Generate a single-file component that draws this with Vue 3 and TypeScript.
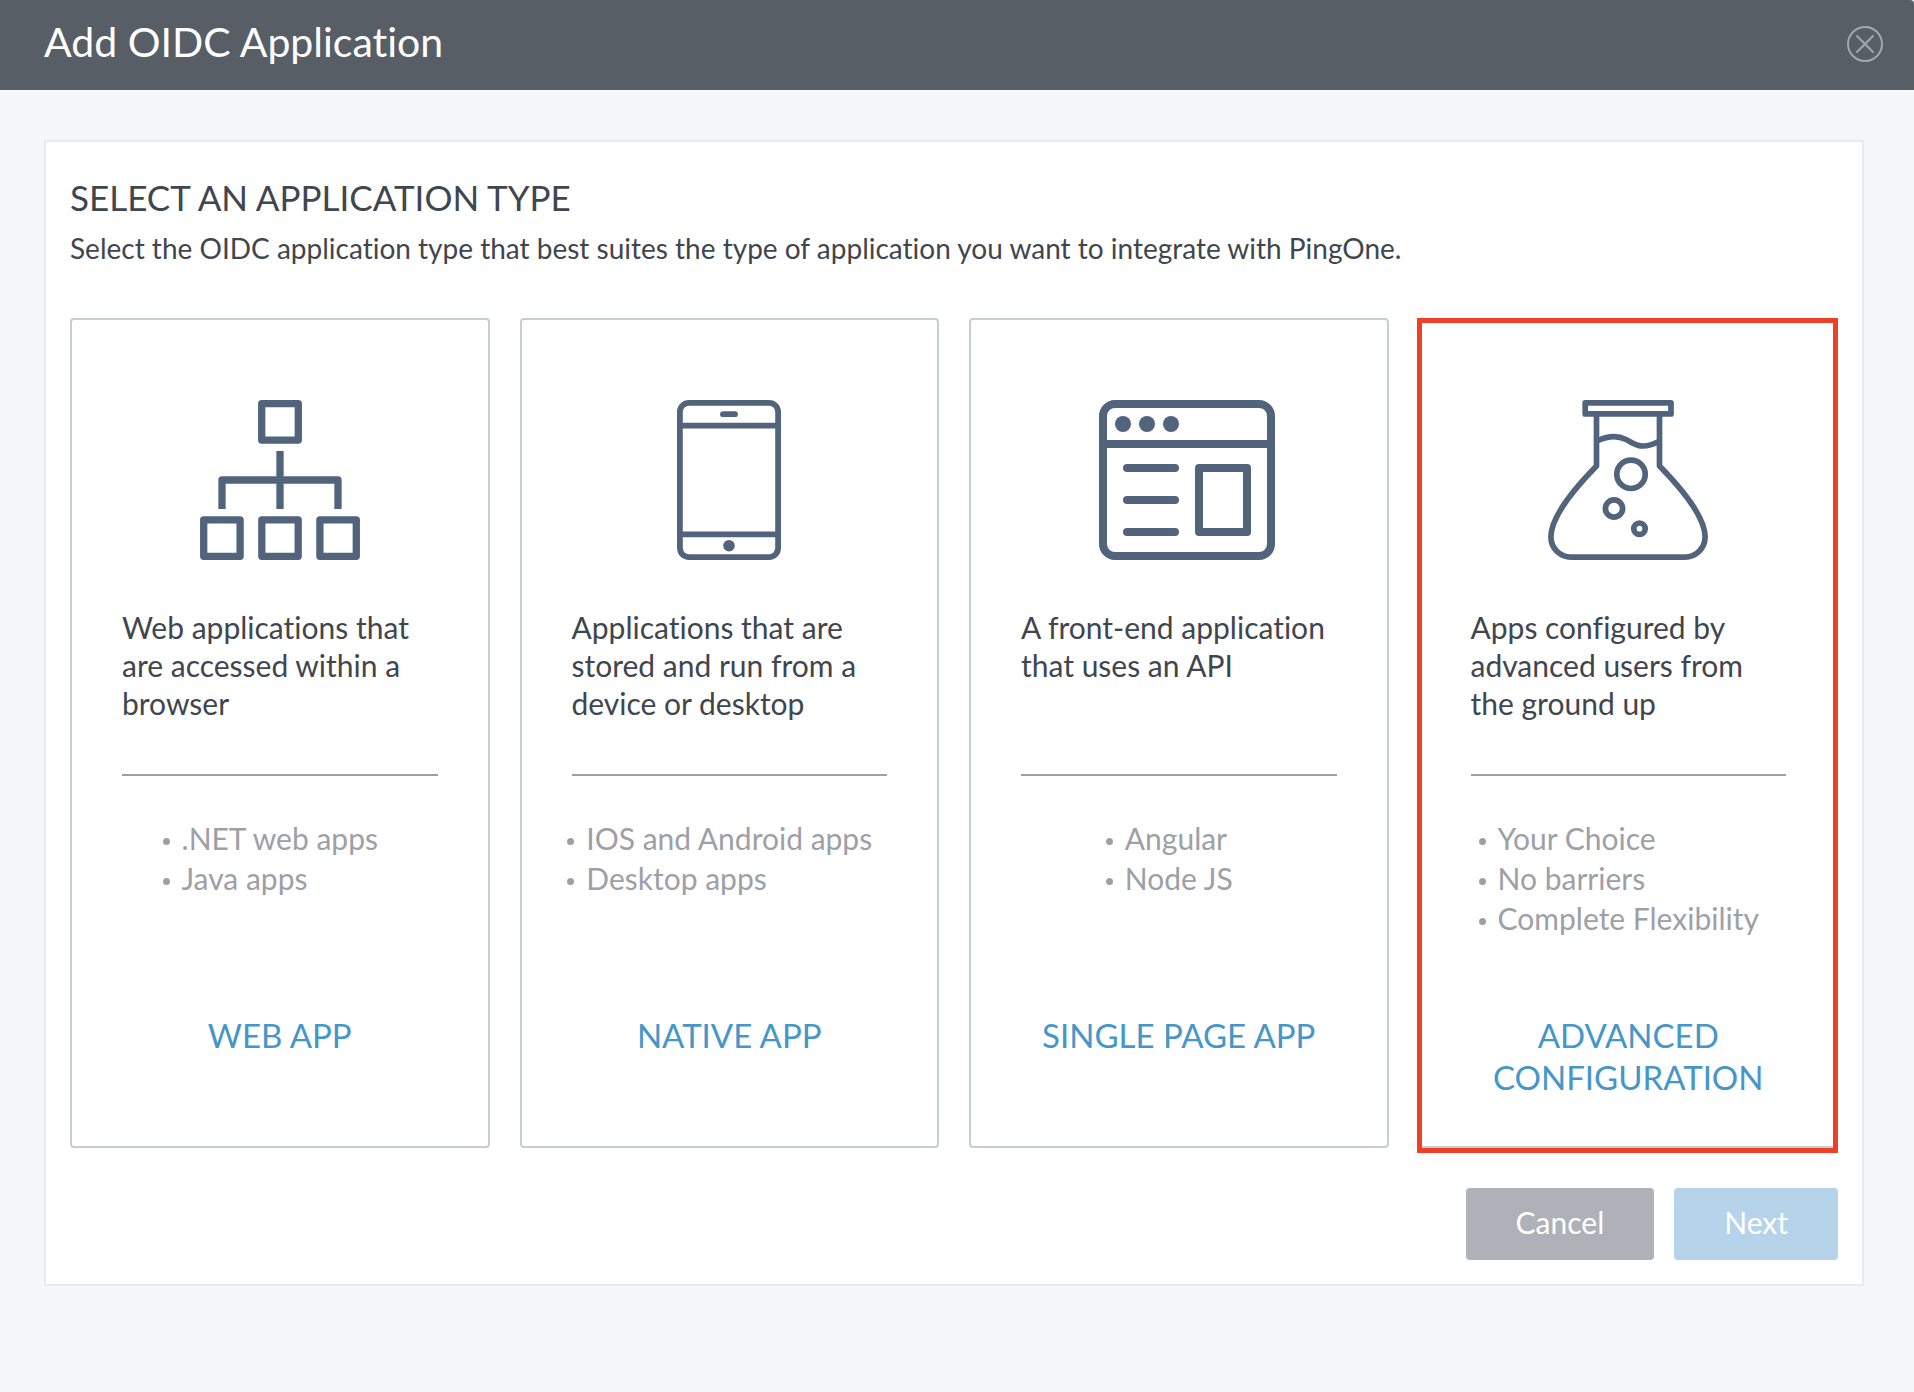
<script setup lang="ts">
import { ref } from 'vue'

type IconName = 'network' | 'phone' | 'browser' | 'flask'

interface AppType {
  id: string
  icon: IconName
  description: string
  examples: string[]
  title: string
}

const appTypes: AppType[] = [
  {
    id: 'web',
    icon: 'network',
    description: 'Web applications that are accessed within a browser',
    examples: ['.NET web apps', 'Java apps'],
    title: 'WEB APP',
  },
  {
    id: 'native',
    icon: 'phone',
    description: 'Applications that are stored and run from a device or desktop',
    examples: ['IOS and Android apps', 'Desktop apps'],
    title: 'NATIVE APP',
  },
  {
    id: 'spa',
    icon: 'browser',
    description: 'A front-end application that uses an API',
    examples: ['Angular', 'Node JS'],
    title: 'SINGLE PAGE APP',
  },
  {
    id: 'advanced',
    icon: 'flask',
    description: 'Apps configured by advanced users from the ground up',
    examples: ['Your Choice', 'No barriers', 'Complete Flexibility'],
    title: 'ADVANCED CONFIGURATION',
  },
]

const highlighted = ref('advanced')
</script>

<template>
  <div class="page">
    <header class="header">
      <h1 class="header-title">Add OIDC Application</h1>
      <button class="close" type="button" aria-label="Close">
        <svg width="38" height="38" viewBox="0 0 38 38" fill="none" stroke="currentColor" stroke-width="2" stroke-linecap="round">
          <circle cx="19" cy="19" r="17" />
          <path d="M11 11L27 27M27 11L11 27" />
        </svg>
      </button>
    </header>

    <main class="panel">
      <h2 class="panel-title">SELECT AN APPLICATION TYPE</h2>
      <p class="panel-text">
        Select the OIDC application type that best suites the type of application you want to integrate with PingOne.
      </p>

      <div class="cards">
        <article
          v-for="type in appTypes"
          :key="type.id"
          class="card"
          :class="{ highlighted: type.id === highlighted }"
        >
          <svg v-if="type.icon === 'network'" class="icon" width="160" height="160" viewBox="0 0 160 160" stroke-width="7.3">
            <rect x="61.7" y="3.7" width="36.6" height="36.4" />
            <rect x="3.7" y="119.9" width="36.4" height="36.4" />
            <rect x="61.8" y="119.9" width="36.4" height="36.4" />
            <rect x="119.9" y="119.9" width="36.4" height="36.4" />
            <path d="M80 51V109M22 109V80H138V109" />
          </svg>
          <svg v-else-if="type.icon === 'phone'" class="icon" width="104" height="160" viewBox="0 0 104 160" stroke-width="5.8">
            <rect x="2.9" y="2.9" width="98.2" height="154.2" rx="9" />
            <path d="M3 25.7H101M3 134.3H101" />
            <path d="M46 14.2H58" stroke-linecap="round" />
            <circle class="solid" cx="52" cy="145.7" r="5.8" />
          </svg>
          <svg v-else-if="type.icon === 'browser'" class="icon wide" width="176" height="160" viewBox="0 0 176 160" stroke-width="8">
            <rect x="4" y="4" width="168" height="152" rx="12" />
            <path d="M4 44H172" />
            <circle class="solid" cx="24" cy="24" r="8" />
            <circle class="solid" cx="48" cy="24" r="8" />
            <circle class="solid" cx="72" cy="24" r="8" />
            <path d="M28 68H76M28 100H76M28 132H76" stroke-linecap="round" />
            <rect x="100" y="68" width="48" height="64" />
          </svg>
          <svg v-else class="icon" width="160" height="160" viewBox="0 0 160 160" stroke-width="5.7">
            <rect x="37.2" y="2.9" width="85.8" height="11" />
            <path d="M48.5 14V66C25 90 2.9 118 2.9 137C2.9 148 12 157.1 23 157.1H137C148 157.1 157.1 148 157.1 137C157.1 118 135 90 111.5 66V14" />
            <path d="M50 40.5C60 36 70 35.5 78 39.5C84 42.5 88 46 95 46C101 46 106 44 111 41.5" />
            <circle cx="83" cy="74.3" r="14.2" />
            <circle cx="66" cy="108.5" r="8.6" />
            <circle cx="91.5" cy="128.7" r="5.7" />
          </svg>

          <p class="card-text">{{ type.description }}</p>
          <ul class="examples">
            <li v-for="example in type.examples" :key="example">{{ example }}</li>
          </ul>
          <button class="card-title" type="button" @click="highlighted = type.id">{{ type.title }}</button>
        </article>
      </div>

      <footer class="actions">
        <button class="btn cancel" type="button">Cancel</button>
        <button class="btn next" type="button" disabled>Next</button>
      </footer>
    </main>
  </div>
</template>

<style>
body {
  background: #f6f7f9;
}
</style>

<style scoped>
.page {
  font-family: Lato, 'Open Sans', sans-serif;
  font-variant-ligatures: none;
  color: #3f464e;
}

.page button {
  font-family: inherit;
  font-variant-ligatures: inherit;
}

.header {
  display: flex;
  align-items: center;
  justify-content: space-between;
  box-sizing: border-box;
  height: 90px;
  padding: 0 30px 2px 44px;
  background: #575e66;
  border-top-right-radius: 4px;
}

.header-title {
  margin: 0;
  padding-bottom: 4px;
  font-size: 41px;
  font-weight: 400;
  line-height: 48px;
  color: #fff;
}

.close {
  display: flex;
  padding: 0;
  border: 0;
  background: none;
  color: #a3a7b0;
  cursor: pointer;
}

.panel {
  margin: 50px 50px 0 44px;
  padding: 33px 24px 24px;
  border: 2px solid #e8eaec;
  background: #fff;
}

.panel-title {
  margin: 0;
  font-size: 35px;
  font-weight: 400;
  line-height: 44px;
}

.panel-text {
  margin: 9px 0 0;
  font-size: 28px;
  line-height: 40px;
}

.cards {
  display: grid;
  grid-template-columns: repeat(4, minmax(0, 1fr));
  gap: 30px;
  margin-top: 50px;
}

.card {
  position: relative;
  display: flex;
  flex-direction: column;
  align-items: center;
  box-sizing: border-box;
  min-height: 830px;
  padding: 80px 50px 48px;
  border: 2px solid #c4ced6;
  border-radius: 4px;
}

.card.highlighted::after {
  content: '';
  position: absolute;
  inset: -2px -2px -7px -4px;
  border: 5px solid #ed4027;
  pointer-events: none;
}

.icon {
  display: block;
  flex: none;
  fill: none;
  stroke: #51647c;
  stroke-linejoin: round;
}

/* The browser glyph hangs over the right edge of the 160px icon slot. */
.icon.wide {
  margin-right: -16px;
}

.solid {
  fill: #51647c;
  stroke: none;
}

.card-text {
  box-sizing: border-box;
  width: 100%;
  min-height: 216px;
  margin: 0;
  padding-top: 48px;
  border-bottom: 2px solid #9da0a7;
  font-size: 30px;
  line-height: 38px;
}

.examples {
  min-height: 120px;
  margin: 42px 0 0;
  padding: 0;
  list-style: none;
  font-size: 30px;
  line-height: 40px;
  color: #9da0a7;
  white-space: nowrap;
}

.examples li {
  position: relative;
}

.examples li::before {
  content: '';
  position: absolute;
  top: 20px;
  left: -19px;
  width: 7px;
  height: 7px;
  border-radius: 50%;
  background: currentColor;
}

.card-title {
  margin: 76px 0 0;
  padding: 0;
  border: 0;
  background: none;
  font-size: 33px;
  line-height: 42px;
  color: #4696c9;
  cursor: pointer;
}

.actions {
  display: flex;
  justify-content: flex-end;
  gap: 20px;
  margin-top: 40px;
}

.btn {
  height: 72px;
  padding: 0 50px 4px;
  border: 0;
  border-radius: 4px;
  font-size: 30px;
  color: #fff;
}

.cancel {
  background: #aeb1b7;
}

.next {
  background: #b6d4e9;
}
</style>
